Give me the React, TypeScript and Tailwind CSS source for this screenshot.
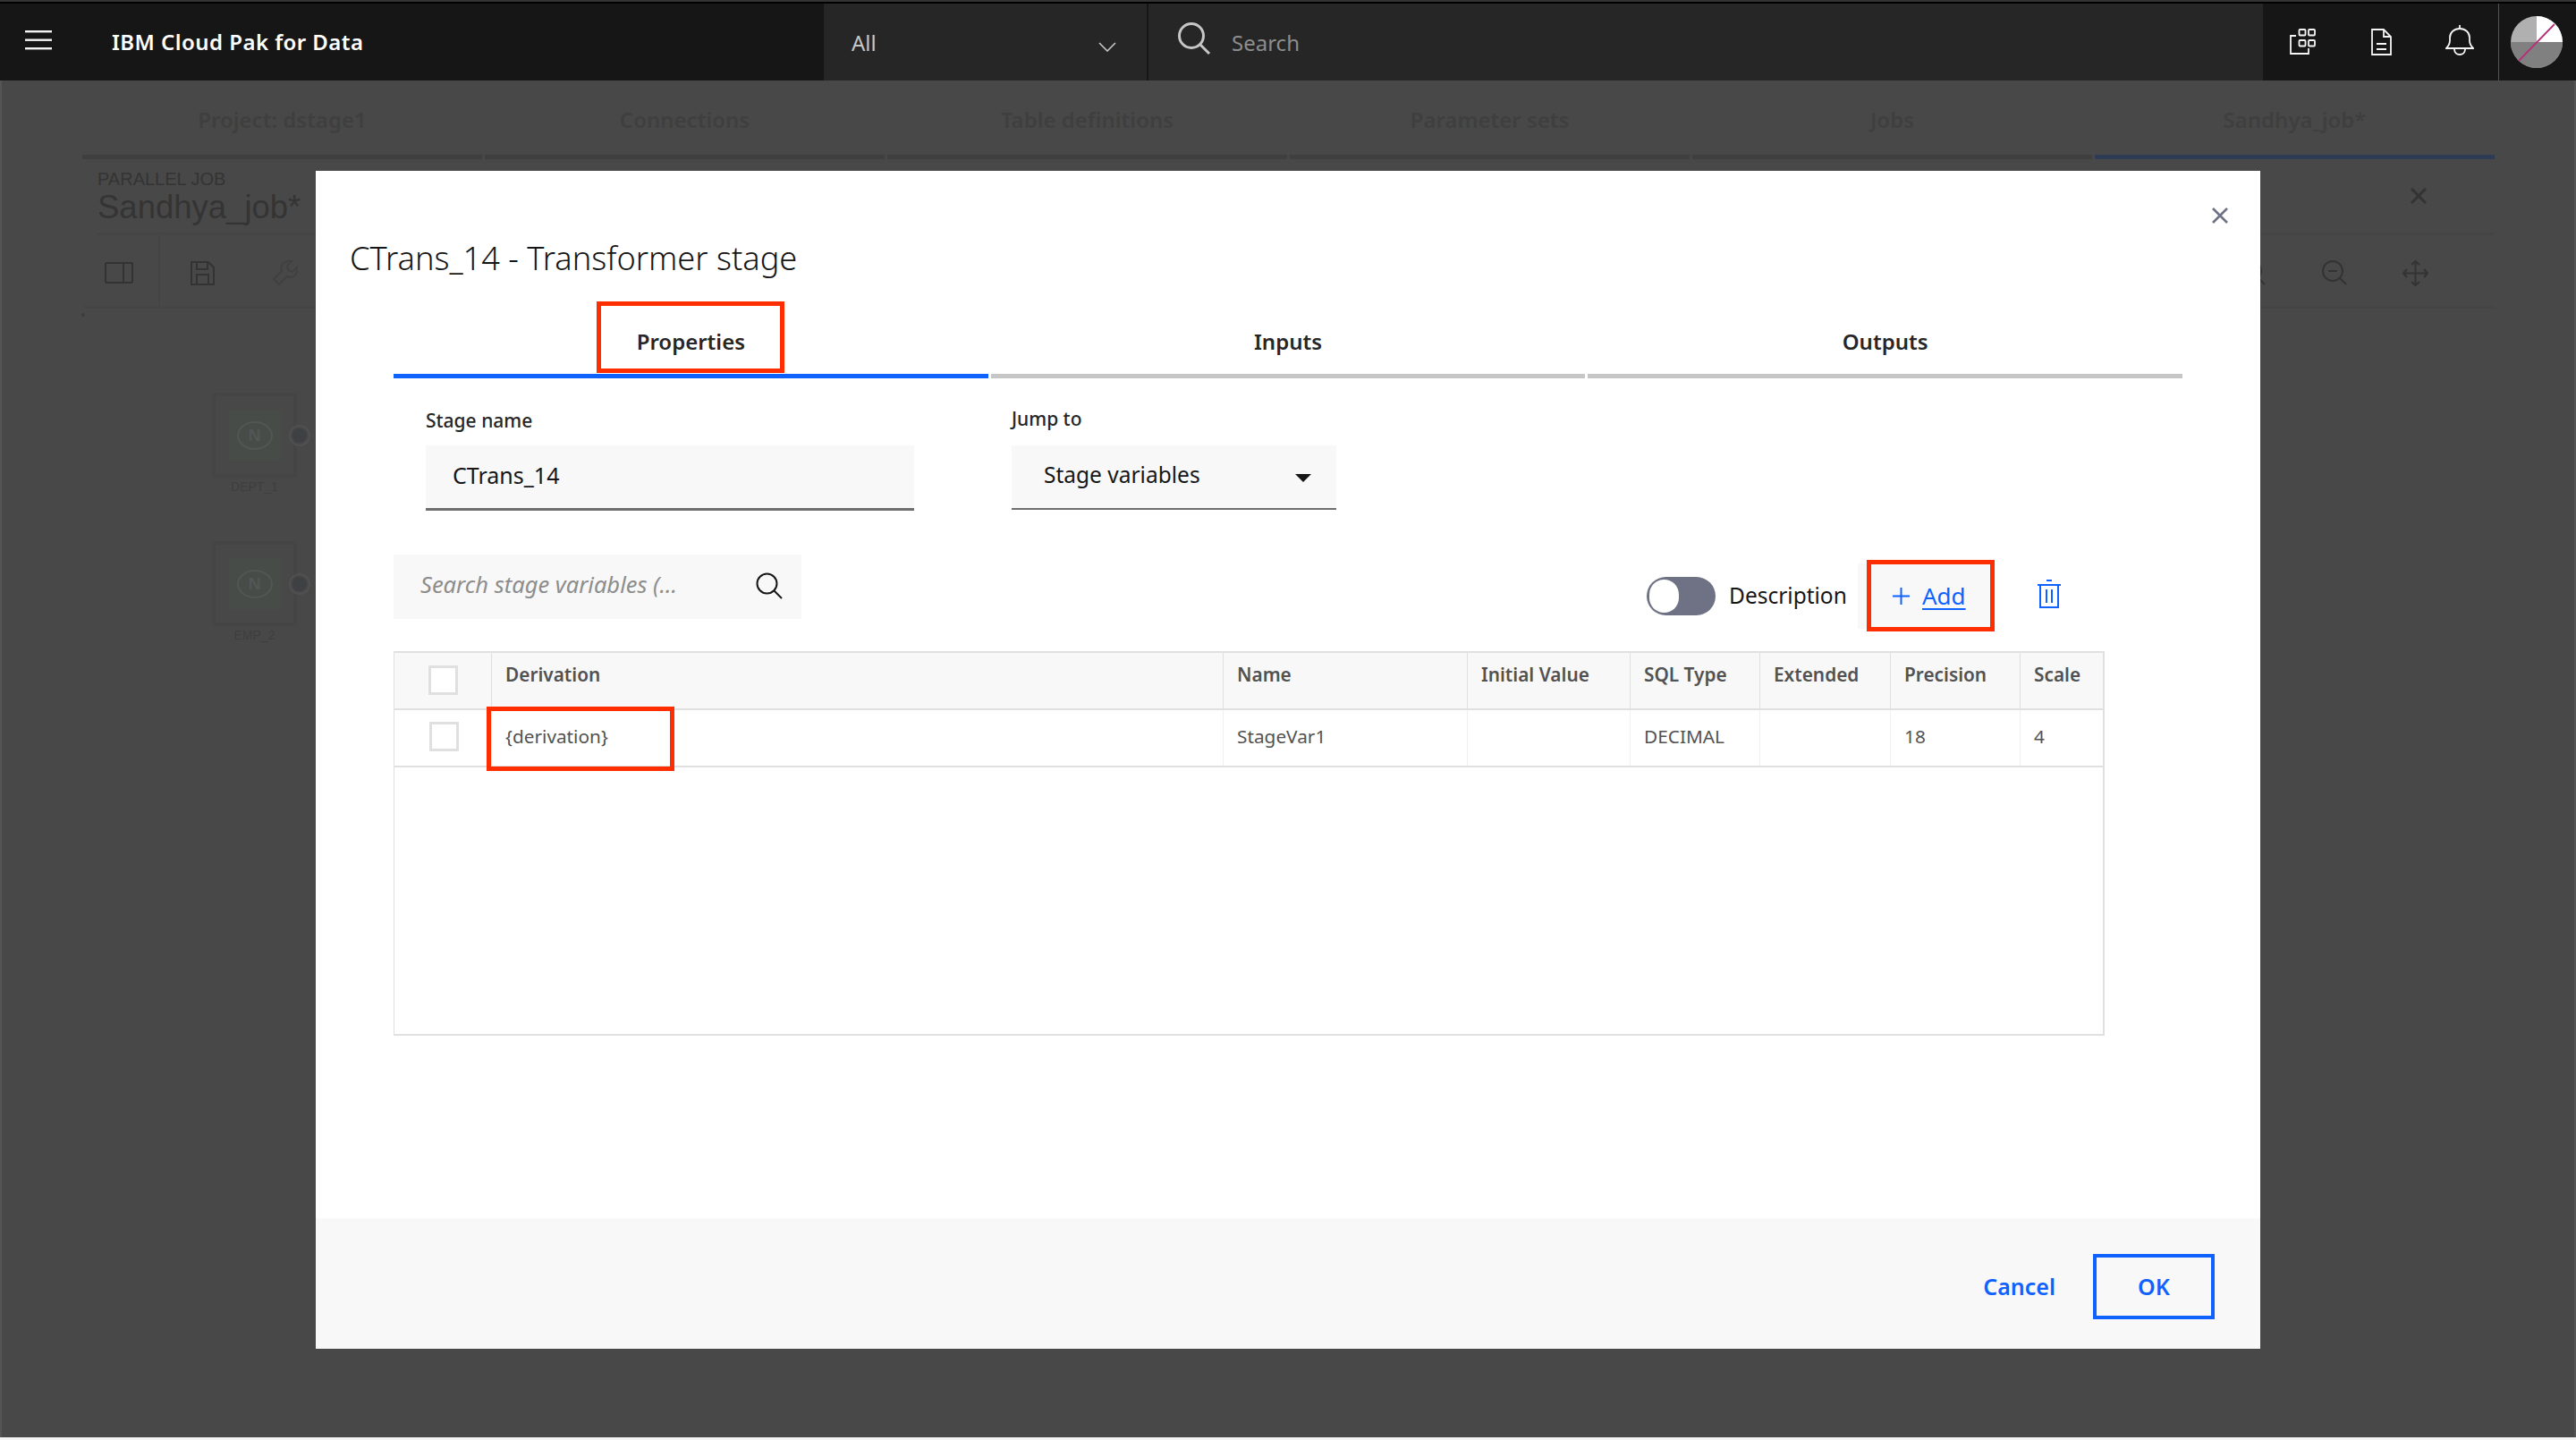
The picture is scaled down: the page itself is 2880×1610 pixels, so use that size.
const columns = ['', 'Derivation', 'Name', 'Initial Value', 'SQL Type', 'Extended', 'Precision', 'Scale'];
const row = ['', '{derivation}', 'StageVar1', '', 'DECIMAL', '', '18', '4'];
const backTabs = ['Project: dstage1', 'Connections', 'Table definitions', 'Parameter sets', 'Jobs', 'Sandhya_job*'];

function Node({ label, className }: { label: string; className: string }) {
  return (
    <div className={`absolute left-[237px] w-[95px] ${className}`}>
      <div className="relative h-[95px] border-[4px] border-[#454545] flex items-center justify-center">
        <div className="w-[57px] h-[57px] bg-[#474c49] flex items-center justify-center">
          <div className="w-[40px] h-[32px] rounded-[50%] border-2 border-[#525654] flex items-center justify-center text-[18px] font-bold text-[#525654]">N</div>
        </div>
        <div className="absolute right-[-19px] top-[32px] w-[24px] h-[24px] rounded-full border-2 border-[#505050] flex items-center justify-center">
          <div className="w-[16px] h-[16px] rounded-full bg-[#3f4043]" />
        </div>
      </div>
      <div className="text-center text-[14px] leading-[20px] text-[#3e3e3e] font-['Liberation_Sans',sans-serif]">{label}</div>
    </div>
  );
}

export default function App() {
  return (
    <div className="relative w-[2880px] h-[1610px] overflow-hidden flex flex-col bg-[#484848] font-['Noto_Sans',sans-serif]">
      <div className="relative z-10 shrink-0">
        <div className="h-[2px] bg-[#333333]" />
        <div className="h-[2px] bg-black" />
        <header className="flex h-[86px] bg-[#161616] text-white">
          <div className="w-[921px] flex items-center">
            <svg className="ml-[28px] mt-[-4px]" width="30" height="24" viewBox="0 0 30 24" fill="#f4f4f4">
              <rect y="1" width="30" height="2.4" />
              <rect y="10.5" width="30" height="2.4" />
              <rect y="20" width="30" height="2.4" />
            </svg>
            <span className="ml-[67px] mt-[-1px] text-[24px] font-semibold leading-[32px] tracking-[0.45px]">IBM Cloud Pak for Data</span>
          </div>
          <div className="w-[363px] bg-[#262626] border-r-2 border-[#161616] flex items-center justify-between pl-[31px] pr-[34px]">
            <span className="mt-[2px] text-[24px] text-[#c6c6c6]">All</span>
            <svg className="mt-[10px]" width="20" height="11" viewBox="0 0 20 11" fill="none" stroke="#c6c6c6" strokeWidth="1.6"><path d="M1 1l9 9 9-9" /></svg>
          </div>
          <div className="flex-1 bg-[#262626] flex items-center pl-[32px]">
            <svg className="mt-[-8px]" width="38" height="38" viewBox="0 0 38 38" fill="none" stroke="#c6c6c6" strokeWidth="3"><circle cx="16" cy="16" r="13.5" /><path d="M26 26l10 10" /></svg>
            <span className="ml-[23px] mt-[2px] text-[24px] text-[#8d8d8d]">Search</span>
          </div>
          <div className="w-[350px] shrink-0 flex items-center text-[#f4f4f4]">
            <svg className="ml-[30px]" width="30" height="30" viewBox="0 0 30 30" fill="none" stroke="currentColor" strokeWidth="1.8">
              <rect x="10.5" y="1" width="7" height="6.5" rx="1" /><rect x="21" y="1" width="7" height="6.5" rx="1" />
              <rect x="10.5" y="13" width="7" height="6.5" rx="1" /><rect x="21" y="13" width="7" height="6.5" rx="1" />
              <path d="M7 8H1v20h20v-6" />
            </svg>
            <svg className="ml-[61px]" width="23" height="30" viewBox="0 0 23 30" fill="none" stroke="currentColor" strokeWidth="1.8">
              <path d="M1 1h13l8 8v20H1z" /><path d="M14 1v8h8" /><path d="M6 17h11M6 23h11" />
            </svg>
            <svg className="ml-[60px] mt-[-4px]" width="32" height="36" viewBox="0 0 32 36" fill="none" stroke="currentColor" strokeWidth="1.8">
              <path d="M16 1v4" /><path d="M1 27c3-3 4-5 4-9v-3c0-6 5-10 11-10s11 4 11 10v3c0 4 1 6 4 9z" /><path d="M10 28c0 8 12 8 12 0" />
            </svg>
            <div className="ml-[27px] self-stretch w-[1px] bg-[#525252]" />
            <svg className="ml-[13px]" width="58" height="58" viewBox="0 0 58 58">
              <circle cx="29" cy="29" r="29" fill="#b0b0b0" />
              <path d="M29 0a29 29 0 0 1 29 29H29z" fill="#ffffff" />
              <path d="M0 29h58a29 29 0 0 1-58 0z" fill="#808080" />
              <path d="M9 50L49 9" stroke="#b5307a" strokeWidth="1.8" />
            </svg>
          </div>
        </header>
      </div>

      <main className="flex-1 flex flex-col min-h-0 pl-[92px] pr-[89px] border-x-2 border-[#555555]">
        <nav className="grid grid-cols-6 gap-[3px] h-[88px] shrink-0 ml-[-2px]">
          {backTabs.map((t, i) => (
            <div key={t} className={`flex items-center justify-center pt-[4px] text-[24px] font-semibold text-[#3f3f3f] border-b-[5px] ${i === 5 ? 'border-[#2d3b55]' : 'border-[#3f3f3f]'}`}>{t}</div>
          ))}
        </nav>
        <div className="flex justify-between items-center h-[85px] shrink-0 border-b-[3px] border-[#454545] ml-[15px] font-['Liberation_Sans',sans-serif] text-[#343434]">
          <div className="mt-[2px]">
            <div className="text-[20px] leading-[24px]">PARALLEL JOB</div>
            <div className="text-[36.500px] leading-[40px]">Sandhya_job*</div>
          </div>
          <svg className="mr-[76px]" width="18" height="18" viewBox="0 0 18 18" stroke="#333333" strokeWidth="3"><path d="M1 1l16 16M17 1L1 17" /></svg>
        </div>
        <div className="flex items-center justify-between h-[82px] shrink-0 border-b-[3px] border-[#454545] text-[#333333]">
          <div className="flex items-center self-stretch">
            <svg className="ml-[23px] mt-[5px]" width="32" height="24" viewBox="0 0 32 24" fill="none" stroke="currentColor" strokeWidth="2"><rect x="1" y="1" width="30" height="22" rx="1" /><path d="M21 1v22" /></svg>
            <div className="ml-[28px] self-stretch w-[2px] bg-[#454545]" />
            <svg className="ml-[34px] mt-[5px]" width="27" height="27" viewBox="0 0 27 27" fill="none" stroke="currentColor" strokeWidth="2"><path d="M1 1h19l6 6v19H1z" /><path d="M7 1v8h12V1M7 26V15h13v11" /></svg>
            <svg className="ml-[65px] mt-[5px]" width="28" height="28" viewBox="0 0 28 28" fill="none" stroke="#404040" strokeWidth="2"><path d="M18 1a8 8 0 0 0-8 11L1 21l6 6 9-9a8 8 0 0 0 11-10l-5 5-5-2-1-5 5-5z" /></svg>
          </div>
          <div className="flex items-center mr-[74px]">
            <svg className="mt-[5px]" width="28" height="28" viewBox="0 0 28 28" fill="none" stroke="currentColor" strokeWidth="2"><circle cx="12" cy="12" r="11" /><path d="M20 20l7 7M12 7v10M7 12h10" /></svg>
            <svg className="ml-[63px] mt-[5px]" width="28" height="28" viewBox="0 0 28 28" fill="none" stroke="currentColor" strokeWidth="2"><circle cx="12" cy="12" r="11" /><path d="M20 20l7 7M7 12h10" /></svg>
            <svg className="ml-[62px] mt-[5px]" width="29" height="29" viewBox="0 0 29 29" fill="none" stroke="currentColor" strokeWidth="2"><path d="M14.5 1v27M1 14.500h27M10 5l4.500-4 4.500 4M10 24l4.500 4 4.500-4M5 10l-4 4.500 4 4.500M24 10l4 4.500-4 4.500" /></svg>
          </div>
        </div>
        <div className="relative flex-1 ml-[-94px]">
          <div className="absolute left-[91px] top-[5px] w-[4px] h-[4px] rounded-full bg-[#3c3c3c]" />
          <Node label="DEPT_1" className="top-[94px]" />
          <Node label="EMP_2" className="top-[260px]" />
        </div>
      </main>
      <div className="h-[3px] shrink-0 bg-[#f4f4f4]" />

      {/* dialog */}
      <div className="absolute left-[353px] top-[191px] w-[2174px] h-[1317px] bg-white flex flex-col text-[#161616]">
        <svg className="absolute left-[2120px] top-[41px]" width="18" height="18" viewBox="0 0 18 18" stroke="#6f7285" strokeWidth="2.600"><path d="M1 1l16 16M17 1L1 17" /></svg>
        <h1 className="pl-[38px] pt-[74px] text-[36.200px] leading-[46px] font-light">CTrans_14 - Transformer stage</h1>

        <div className="ml-[87px] w-[2000px] h-[112px] shrink-0 grid grid-cols-3 gap-[3px]">
          {['Properties', 'Inputs', 'Outputs'].map((t, i) => (
            <div key={t} className={`relative flex items-end justify-center pb-[21px] border-b-[5px] ${i === 0 ? 'border-[#0f62fe]' : 'border-[#c6c6c6]'}`}>
              <span className="text-[24px] leading-[30px] font-semibold text-[#262626]">{t}</span>
              {i === 0 && <div className="absolute left-[227px] top-[26px] w-[210px] h-[80px] border-[5px] border-[#ff2e00]" />}
            </div>
          ))}
        </div>

        <div className="ml-[123px] mt-[30px] flex items-start shrink-0">
          <div className="w-[546px] pt-[2px]">
            <div className="text-[21px] leading-[30px] font-medium text-[#262626]">Stage name</div>
            <div className="mt-[13px] h-[73px] pl-[30px] pb-[2px] flex items-center bg-[#f8f8f8] border-b-[3px] border-[#6f6f6f] text-[25px]">CTrans_14</div>
          </div>
          <div className="ml-[109px] w-[363px]">
            <div className="text-[21px] leading-[30px] font-medium text-[#262626]">Jump to</div>
            <div className="mt-[15px] h-[72px] pl-[36px] pr-[28px] pb-[3px] flex items-center justify-between bg-[#f8f8f8] border-b-2 border-[#6f6f6f] text-[24.500px]">
              <span>Stage variables</span>
              <span className="w-0 h-0 mt-[6px] border-x-[9px] border-x-transparent border-t-[9px] border-t-[#161616]" />
            </div>
          </div>
        </div>

        <div className="ml-[87px] mt-[49px] h-[86px] flex items-start shrink-0">
          <div className="w-[456px] h-[72px] bg-[#f8f8f8] flex items-center pl-[30px] pr-[21px] justify-between">
            <span className="mt-[-5px] text-[25.500px] italic text-[#8d8d8d]">Search stage variables (...</span>
            <svg className="mt-[-2px]" width="30" height="30" viewBox="0 0 30 30" fill="none" stroke="#161616" strokeWidth="2"><circle cx="12.500" cy="12.500" r="11" /><path d="M20 20l9 9" /></svg>
          </div>
          <div className="ml-[945px] mt-[25px] w-[77px] h-[43px] rounded-full bg-[#6f7285] flex items-center pl-[3px]">
            <div className="w-[33px] h-[37px] rounded-full bg-white" />
          </div>
          <span className="ml-[15px] mt-[29px] w-[144px] text-[24.500px] leading-[34px]">Description</span>
          <div className="relative mt-[10px] w-[153px] h-[73px] bg-[#f8f8f8] flex items-center pl-[39px] gap-[14px] text-[#0f62fe]">
            <svg width="19" height="19" viewBox="0 0 19 19" stroke="currentColor" strokeWidth="2"><path d="M9.500 0v19M0 9.500h19" /></svg>
            <span className="text-[26px] underline underline-offset-4">Add</span>
            <div className="absolute left-[10px] top-[-4px] w-[143px] h-[80px] border-[5px] border-[#ff2e00]" />
          </div>
          <svg className="ml-[48px] mt-[28px]" width="26" height="32" viewBox="0 0 26 32" fill="none" stroke="#0f62fe" strokeWidth="2">
            <path d="M10 1h6M0 6h26M3 6v25h20V6M10 11v15M16 11v15" />
          </svg>
        </div>

        <div className="ml-[87px] mt-[22px] w-[1913px] h-[430px] shrink-0 border-y-2 border-l border-r-2 border-[#e0e0e0] bg-white">
          <div className="grid grid-cols-[108px_818px_273px_182px_145px_146px_145px_93px] h-[64px] bg-[#f8f8f8] border-b-2 border-[#e0e0e0]">
            {columns.map((c, i) => (
              <div key={i} className={`h-full text-[20.800px] leading-[28px] font-semibold text-[#525252] ${i === 0 ? 'flex justify-center pt-[14px]' : 'pl-[15px] pt-[10px]'} ${i > 0 ? 'border-l border-[#e0e0e0]' : ''}`}>
                {i === 0 ? <div className="w-[33px] h-[33px] bg-white border-[3px] border-[#e0e0e0]" /> : c}
              </div>
            ))}
          </div>
          <div className="grid grid-cols-[108px_818px_273px_182px_145px_146px_145px_93px] h-[64px] border-b-2 border-[#e0e0e0]">
            {row.map((c, i) => (
              <div key={i} className={`relative h-full flex items-center pb-[3px] text-[20.800px] text-[#525252] ${i === 0 ? 'justify-center pl-[2px]' : 'pl-[15px]'} ${i > 0 ? 'border-l border-[#f0f0f0]' : ''}`}>
                {i === 0 ? <div className="w-[33px] h-[33px] border-[3px] border-[#e0e0e0]" /> : c}
                {i === 1 && <div className="absolute left-[-6px] top-[-4px] w-[210px] h-[72px] border-[5px] border-[#ff2e00]" />}
              </div>
            ))}
          </div>
        </div>

        <div className="flex-1" />
        <footer className="h-[146px] shrink-0 bg-[#f8f8f8] flex justify-end items-start pt-[40px] pr-[51px]">
          <button className="h-[73px] mr-[42px] text-[25px] font-semibold text-[#0f62fe]">Cancel</button>
          <button className="w-[136px] h-[73px] border-[4px] border-[#0f62fe] text-[25px] font-semibold text-[#0f62fe]">OK</button>
        </footer>
      </div>
    </div>
  );
}
